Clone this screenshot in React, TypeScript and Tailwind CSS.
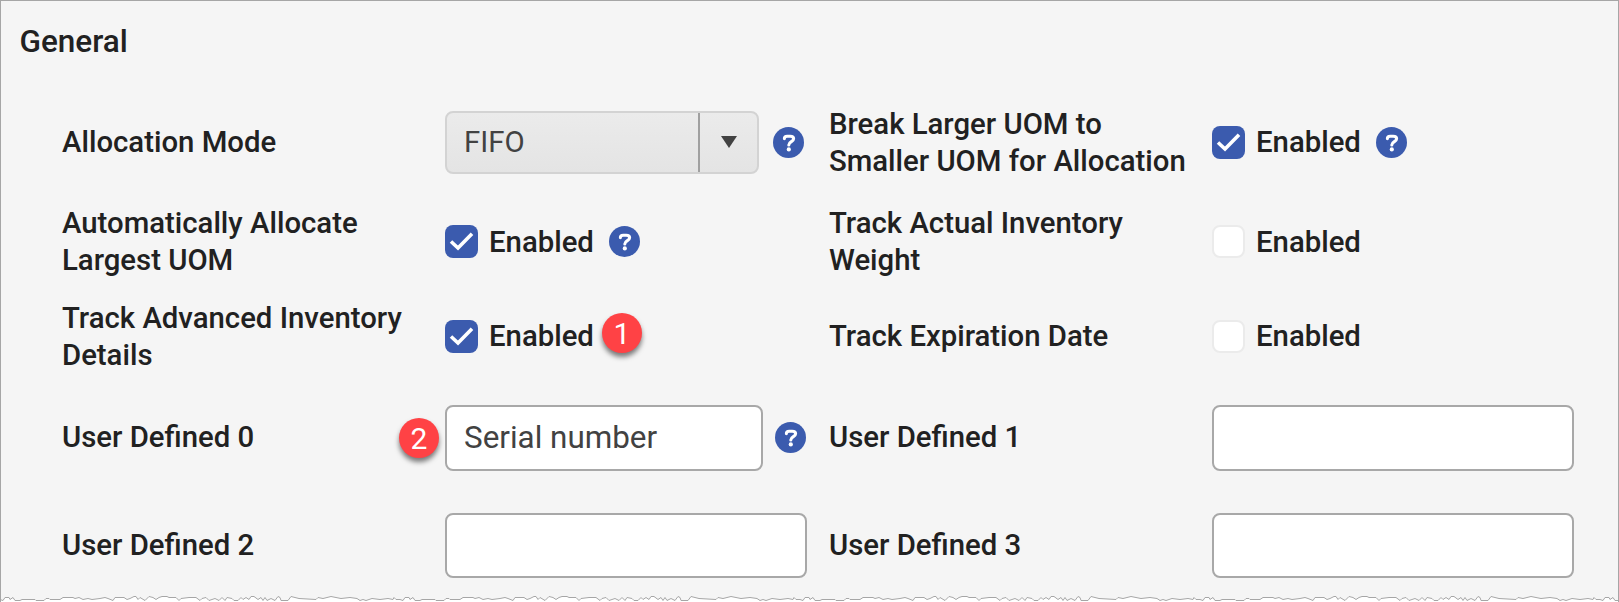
import { ReactNode } from 'react';

interface FieldProps {
  label: ReactNode;
  children?: ReactNode;
}

interface CheckboxProps {
  checked?: boolean;
  labelClassName?: string;
}

// One stretch of the torn bottom edge, repeated across the width
const TEAR_WIDTH = 400;
const TEAR = [
  [0, 3], [3, 4], [5, 1], [9, 1], [10, 3], [13, 1], [15, 4], [20, 4], [22, 3], [35, 3],
  [36, 4], [44, 4], [46, 2], [49, 2], [50, 3], [60, 3], [63, 1], [73, 1], [75, 2], [79, 1],
  [83, 3], [88, 2], [92, 3], [100, 2], [105, 1], [108, 2], [113, 4], [115, 1], [124, 1],
  [127, 3], [130, 2], [134, 0], [136, 0], [138, 3], [140, 1], [145, 4], [149, 0], [153, 1],
  [156, 3], [159, 1], [162, 0], [167, 0], [169, 1], [176, 1], [179, 4], [181, 2], [189, 1],
  [196, 1], [200, 4], [202, 2], [206, 1], [209, 4], [215, 2], [219, 4], [222, 1], [225, 4],
  [227, 1], [232, 2], [234, 4], [238, 4], [241, 1], [243, 3], [246, 1], [249, 3], [251, 0],
  [254, 0], [258, 3], [261, 1], [263, 4], [265, 1], [267, 4], [271, 2], [275, 4], [278, 0],
  [280, 1], [281, 4], [288, 4], [291, 0], [295, 1], [299, 2], [316, 3], [318, 1], [323, 2],
  [331, 0], [336, 1], [341, 2], [350, 1], [357, 2], [360, 4], [363, 3], [366, 4], [372, 2],
  [380, 3], [388, 2], [393, 3], [394, 1], [396, 3]
];
const tearPoints = [0, 1, 2, 3, 4]
  .flatMap((n) => TEAR.map(([x, y]) => `${x + n * TEAR_WIDTH},${y + 0.5}`))
  .join(' ');

const HelpIcon = () => (
  <svg className="h-[31px] w-[31px] shrink-0" viewBox="0 0 31 31" fill="none">
    <circle cx="15.5" cy="15.5" r="15.5" fill="#3b5bae" />
    <path
      d="M11.4 11.6C11.4 9.9 12.4 9.3 14.2 9.3H17.2C19.4 9.3 20.6 10.2 20.6 11.8C20.6 14.8 15.8 14.4 15.8 18"
      stroke="#fff"
      strokeWidth="3.1"
      strokeLinecap="round"
    />
    <circle cx="15.8" cy="22.4" r="2.1" fill="#fff" />
  </svg>
);

const Checkbox = ({ checked = false, labelClassName = '' }: CheckboxProps) => (
  <div className="flex items-center">
    <span
      className={`flex size-[33px] items-center justify-center rounded-lg ${
        checked ? 'bg-[#3b5bae]' : 'border-2 border-[#ebebeb] bg-white'
      }`}
    >
      {checked && (
        <svg className="size-[33px]" viewBox="0 0 33 33" fill="none">
          <path d="M6 16.5L13 23L27 8.8" stroke="#fff" strokeWidth="3.6" />
        </svg>
      )}
    </span>
    <span className={`ml-[11px] w-[105px] ${labelClassName}`}>Enabled</span>
  </div>
);

const Badge = ({ value, className }: { value: number; className: string }) => (
  <span
    className={`absolute flex size-10 items-center justify-center rounded-full bg-[#ff4245] pt-0.5 text-[30px] leading-none font-normal text-white shadow-[0_4px_5px_rgba(0,0,0,0.5)] ${className}`}
  >
    {value}
  </span>
);

const Input = ({ value = '', className }: { value?: string; className: string }) => (
  <div
    className={`flex items-center rounded-lg border-2 border-[#a8a8a8] bg-white pt-px pl-[17px] text-[31.4px] font-normal text-[#424242] ${className}`}
  >
    {value}
  </div>
);

const Field = ({ label, children }: FieldProps) => (
  <div className="flex w-[767px] items-center">
    <div className={`w-[383px] shrink-0 ${typeof label === 'string' ? '' : 'pt-px'}`}>{label}</div>
    <div className="relative flex items-center">{children}</div>
  </div>
);

const App = () => (
  <div className="relative h-[602px] w-[1619px] overflow-hidden border-x border-t border-[#a6a6a6] bg-[#f5f5f5] font-['Roboto',sans-serif] text-[29.33px] leading-[36.6px] font-medium text-[#212121]">
    <h2 className="h-[90px] pt-[23px] pl-[18.5px] text-[31.5px] font-medium">General</h2>
    <div className="grid grid-cols-[767px_767px] grid-rows-[103px_95px_95px_107px_108px] pl-[61px]">
      <Field label="Allocation Mode">
        <div className="flex h-[63px] w-[314px] rounded-lg border-2 border-[#d3d3d3] bg-linear-to-b from-[#ebebeb] to-[#e4e4e4] font-normal text-[#424242]">
          <div className="flex flex-1 items-center pl-[17px]">FIFO</div>
          <div className="flex w-[59px] items-center justify-center border-l-2 border-[#a0a0a0]">
            <svg className="mb-px h-3 w-4" viewBox="0 0 16 12">
              <path d="M0 0H16L8 12Z" fill="#424242" />
            </svg>
          </div>
        </div>
        <div className="ml-[13.5px]"><HelpIcon /></div>
      </Field>
      <Field label={<>Break Larger UOM to<br />Smaller UOM for Allocation</>}>
        <Checkbox checked />
        <div className="ml-[14.5px]"><HelpIcon /></div>
      </Field>
      <Field label={<>Automatically Allocate<br />Largest UOM</>}>
        <Checkbox checked labelClassName="pt-px" />
        <div className="ml-[14.5px]"><HelpIcon /></div>
      </Field>
      <Field label={<>Track Actual Inventory<br />Weight</>}>
        <Checkbox labelClassName="pt-px" />
      </Field>
      <Field label={<>Track Advanced Inventory<br />Details</>}>
        <Checkbox checked />
        <Badge value={1} className="top-[-5px] left-[157px]" />
      </Field>
      <Field label="Track Expiration Date">
        <Checkbox />
      </Field>
      <Field label="User Defined 0">
        <Badge value={2} className="top-[13px] left-[-46px]" />
        <Input value="Serial number" className="h-[66px] w-[318px]" />
        <div className="ml-[11.5px]"><HelpIcon /></div>
      </Field>
      <Field label="User Defined 1">
        <Input className="h-[66px] w-[362px]" />
      </Field>
      <Field label="User Defined 2">
        <Input className="h-[65px] w-[362px]" />
      </Field>
      <Field label="User Defined 3">
        <Input className="h-[65px] w-[362px]" />
      </Field>
    </div>
    <svg className="absolute bottom-0 -left-px h-[6px] w-[1619px]" viewBox="0 0 1619 6">
      <polygon points={`${tearPoints} 2000,6 0,6`} fill="#fff" />
      <polyline points={tearPoints} fill="none" stroke="#a6a6a6" />
    </svg>
  </div>
);

export default App;
